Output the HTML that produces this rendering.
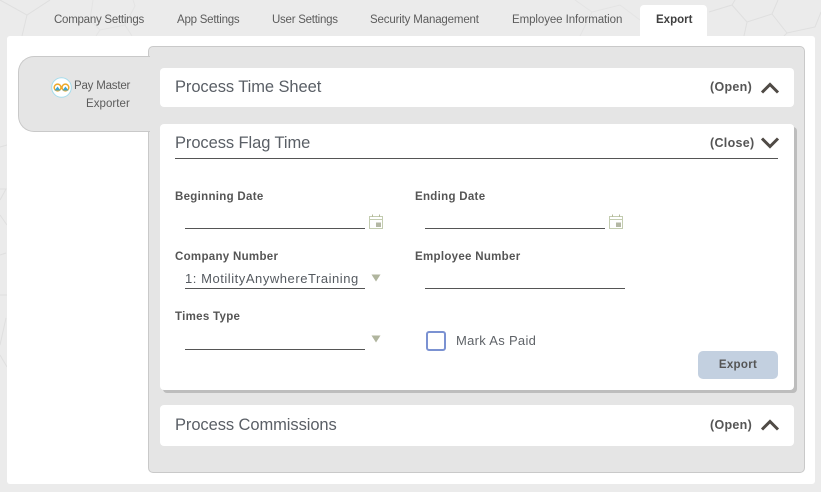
<!DOCTYPE html>
<html>
<head>
<meta charset="utf-8">
<style>
html,body{margin:0;padding:0}
body{width:821px;height:492px;position:relative;overflow:hidden;background:#ebebeb;font-family:"Liberation Sans",sans-serif;color:#555}
.a{position:absolute;white-space:nowrap}
.tab{top:13px;font-size:11.5px;line-height:14px;color:#5c5c5c}
.card{position:absolute;left:160px;width:634px;background:#fff;border-radius:4px}
.h{font-size:16.5px;line-height:22px;color:#5a5f66;left:175px;letter-spacing:-.08px}
.st{font-size:12.5px;line-height:16px;font-weight:bold;color:#555;letter-spacing:.3px}
.lb{font-size:11.5px;line-height:14px;font-weight:bold;color:#555;letter-spacing:.3px}
.ln{position:absolute;height:1px;background:#555}
</style>
</head>
<body>
<svg class="a" style="left:0;top:0" width="821" height="492" fill="none" stroke="#dfdfdf" stroke-width="1">
<path d="M0 0L27 15L50 0M27 15L22 36M709 12L732 5L747 22L772 14L778 0M732 5L735 0M747 22L744 36M772 14L787 33L815 27L821 12M787 33L784 36"/>
<path stroke="#e4e4e4" d="M93 0L90 20L100 30L125 25L135 6L133 0M100 30L96 36M125 25L132 36M580 36L592 12L620 5L640 20M592 12L575 0"/>
<path d="M0 147L7 145M0 189L6 189L0 200M0 215L7 225M0 255L6 253M0 295L7 295M6 318L0 345M0 355L7 367"/>
</svg>
<div class="a" style="left:7px;top:36px;width:808px;height:448px;background:#fff;border-radius:3px"></div>
<div class="a" style="left:640px;top:5px;width:67px;height:31px;background:#fff;border-radius:4px 4px 0 0"></div>

<div class="a tab" style="left:54px;letter-spacing:-.25px">Company Settings</div>
<div class="a tab" style="left:177px;letter-spacing:-.23px">App Settings</div>
<div class="a tab" style="left:272px;letter-spacing:-.25px">User Settings</div>
<div class="a tab" style="left:370px;letter-spacing:-.16px">Security Management</div>
<div class="a tab" style="left:512px;letter-spacing:-.08px">Employee Information</div>
<div class="a tab" style="left:656px;font-weight:bold;color:#3f3f3f">Export</div>

<div class="a" style="left:148px;top:46px;width:655px;height:425px;background:#e5e5e5;border:1px solid #c9c9c9;border-radius:5px"></div>
<div class="a" style="left:18px;top:56px;width:131px;height:74px;background:#e5e5e5;border:1px solid #c9c9c9;border-right:0;border-radius:16px 0 0 16px"></div>

<svg class="a" style="left:51px;top:77px" width="21" height="21" viewBox="0 0 21 21">
<circle cx="10.5" cy="10.5" r="9.8" fill="#fff" stroke="#a5dcec" stroke-width="1"/>
<circle cx="6.6" cy="10.5" r="3.4" fill="none" stroke="#eda92c" stroke-width="1.5"/>
<circle cx="14.4" cy="10.5" r="3.4" fill="none" stroke="#eda92c" stroke-width="1.5"/>
<path d="M3.5 13.5L6.6 9.5L9.5 13.5zM11.5 13.5L14.4 9.5L17.5 13.5z" fill="#3fa6cf"/>
</svg>
<div class="a" style="left:74px;top:79px;font-size:11.5px;line-height:14px;color:#5c5c5c;letter-spacing:-.2px">Pay Master</div>
<div class="a" style="left:86px;top:97px;font-size:11.5px;line-height:14px;color:#5c5c5c;letter-spacing:.05px">Exporter</div>

<div class="card" style="top:68px;height:39px"></div>
<div class="card" style="top:124px;height:266px;box-shadow:3px 3px 0 #bdbdbd"></div>
<div class="card" style="top:405px;height:41px"></div>

<div class="a h" style="top:76px">Process Time Sheet</div>
<div class="a h" style="top:132px">Process Flag Time</div>
<div class="a h" style="top:414px">Process Commissions</div>

<div class="a st" style="left:710px;top:79px">(Open)</div>
<div class="a st" style="left:710px;top:135px">(Close)</div>
<div class="a st" style="left:710px;top:417px">(Open)</div>

<svg class="a" style="left:760px;top:81px" width="20" height="14" fill="none" stroke="#4f4a45" stroke-width="3"><path d="M2 11.5L10 3.5L18 11.5"/></svg>
<svg class="a" style="left:760px;top:136px" width="20" height="14" fill="none" stroke="#4f4a45" stroke-width="3"><path d="M2 2.5L10 10.5L18 2.5"/></svg>
<svg class="a" style="left:760px;top:418px" width="20" height="14" fill="none" stroke="#4f4a45" stroke-width="3"><path d="M2 11.5L10 3.5L18 11.5"/></svg>

<div class="ln" style="left:175px;top:158px;width:603px"></div>

<div class="a lb" style="left:175px;top:190px">Beginning Date</div>
<div class="a lb" style="left:415px;top:190px">Ending Date</div>
<div class="a lb" style="left:175px;top:250px">Company Number</div>
<div class="a lb" style="left:415px;top:250px">Employee Number</div>
<div class="a lb" style="left:175px;top:310px">Times Type</div>

<div class="ln" style="left:185px;top:228px;width:180px"></div>
<div class="ln" style="left:425px;top:228px;width:180px"></div>
<div class="ln" style="left:185px;top:288px;width:180px"></div>
<div class="ln" style="left:425px;top:288px;width:200px"></div>
<div class="ln" style="left:185px;top:349px;width:180px"></div>

<svg class="a" style="left:368px;top:213px" width="16" height="17" fill="none"><rect x="1.5" y="3.5" width="13" height="12" stroke="#c3ccb0"/><path d="M1.5 6.5H14.5" stroke="#c3ccb0"/><path d="M4.5 1.5V4M11.5 1.5V4" stroke="#b5b99a"/><rect x="8" y="9.5" width="5" height="4.5" fill="#b4b8a4"/></svg>
<svg class="a" style="left:608px;top:213px" width="16" height="17" fill="none"><rect x="1.5" y="3.5" width="13" height="12" stroke="#c3ccb0"/><path d="M1.5 6.5H14.5" stroke="#c3ccb0"/><path d="M4.5 1.5V4M11.5 1.5V4" stroke="#b5b99a"/><rect x="8" y="9.5" width="5" height="4.5" fill="#b4b8a4"/></svg>

<div class="a" style="left:185px;top:271px;font-size:13px;line-height:16px;color:#555a60;letter-spacing:.54px">1: MotilityAnywhereTraining</div>
<svg class="a" style="left:371px;top:274px" width="10" height="8"><path d="M0.5 0.5H9.5L5 7.5z" fill="#b0b59e"/></svg>
<svg class="a" style="left:371px;top:335px" width="10" height="8"><path d="M0.5 0.5H9.5L5 7.5z" fill="#b0b59e"/></svg>

<div class="a" style="left:426px;top:331px;width:16px;height:16px;border:2px solid #7b92d2;border-radius:3px;background:#fff"></div>
<div class="a" style="left:456px;top:333px;font-size:13px;line-height:16px;color:#5f6368;letter-spacing:.3px">Mark As Paid</div>

<div class="a" style="left:698px;top:351px;width:80px;height:28px;background:#c3d0e0;border-radius:5px;text-align:center;font-size:11.5px;line-height:28px;font-weight:bold;color:#555;letter-spacing:.3px">Export</div>
</body>
</html>
